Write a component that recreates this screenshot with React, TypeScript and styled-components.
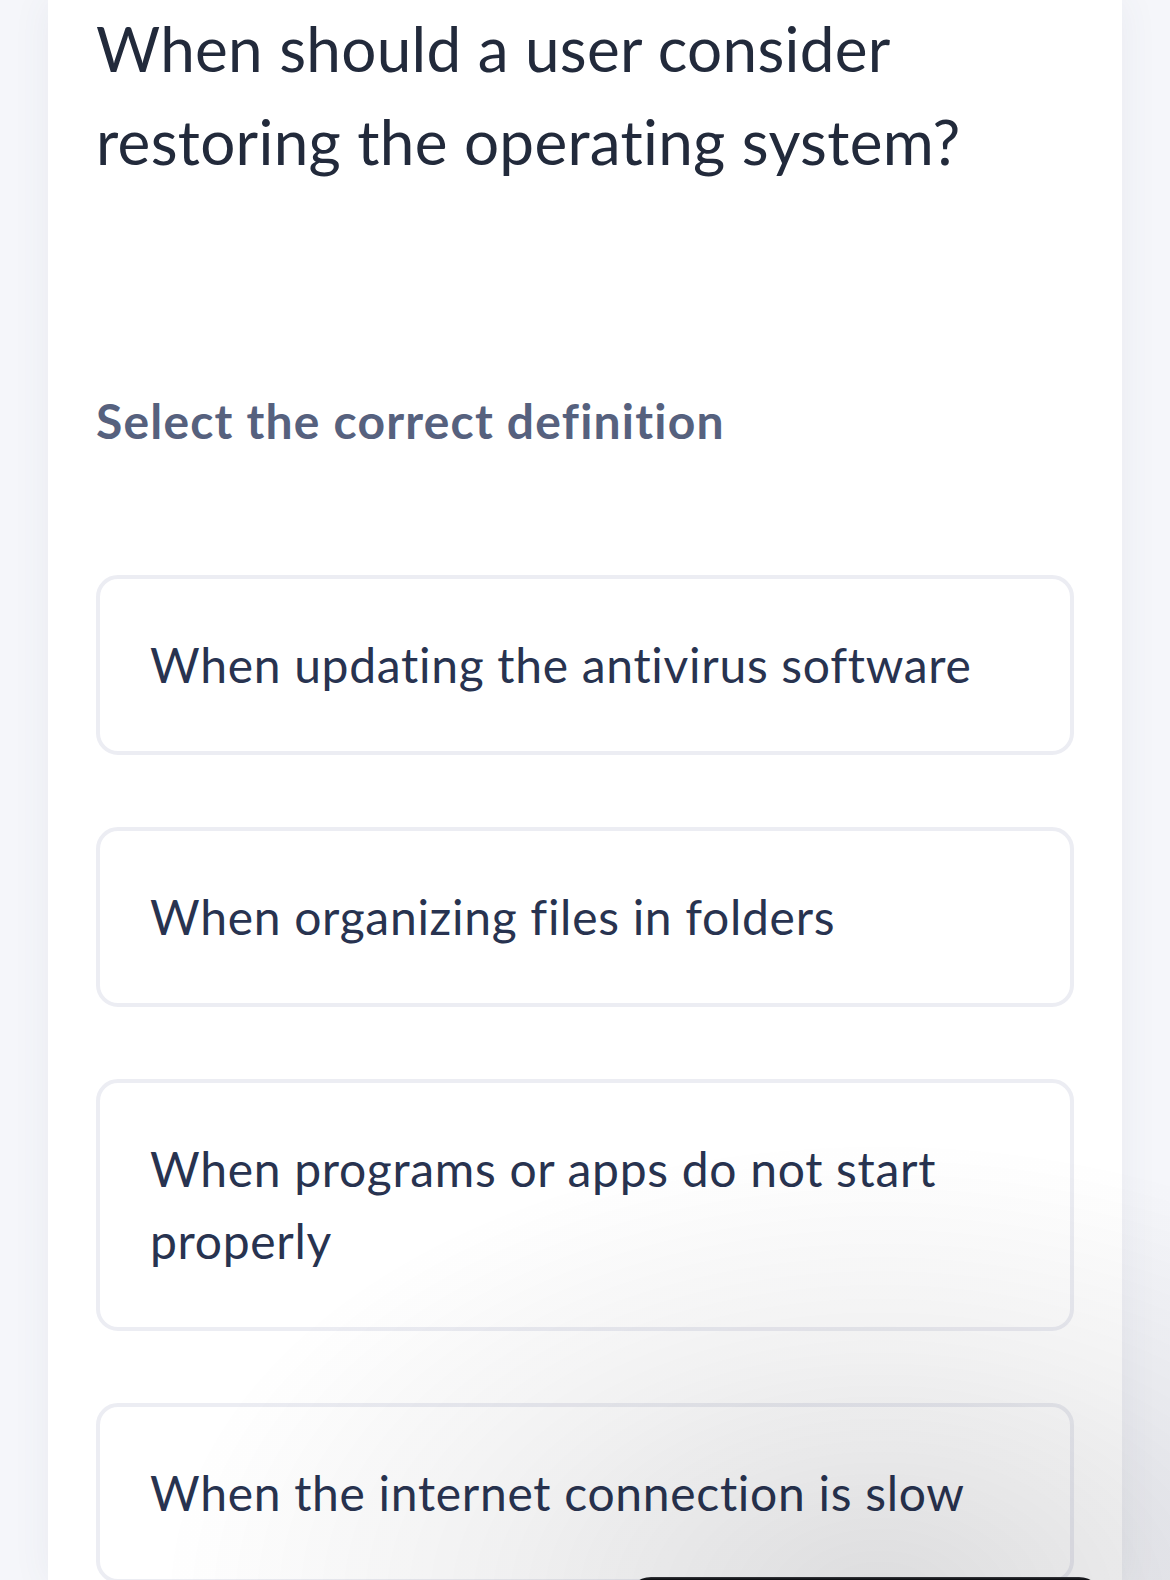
import styled, { createGlobalStyle } from "styled-components";

const GlobalStyle = createGlobalStyle`
  html, body {
    margin: 0;
    padding: 0;
    background: #f5f6fa;
    overflow: hidden;
  }
  body {
    font-family: Lato, "Noto Sans", sans-serif;
  }
`;

const Page = styled.div`
  height: 1580px;
  padding: 0 48px;
  box-sizing: border-box;
  overflow: hidden;
`;

const Card = styled.main`
  background: #ffffff;
  width: 1074px;
  min-height: 1580px;
  padding: 2px 48px 0 48px;
  box-sizing: border-box;
  box-shadow: 0 0 36px rgba(70, 80, 120, 0.07);
`;

const Question = styled.h1`
  margin: 0;
  font-size: 62px;
  font-weight: 400;
  line-height: 93px;
  color: #222a3b;
  letter-spacing: 0.3px;
`;

const Prompt = styled.h2`
  margin: 205px 0 0;
  font-size: 48px;
  font-weight: 700;
  line-height: 56px;
  letter-spacing: 1.2px;
  color: #56617e;
`;

const Options = styled.div`
  display: flex;
  flex-direction: column;
  gap: 72px;
  margin-top: 126px;
`;

const Option = styled.button`
  display: block;
  width: 100%;
  text-align: left;
  background: transparent;
  border: 4px solid #ecedf3;
  border-radius: 22px;
  padding: 50px 50px;
  font-family: inherit;
  font-size: 48px;
  line-height: 72px;
  letter-spacing: 0.7px;
  color: #283350;
  cursor: pointer;
`;

const Shade = styled.div`
  position: fixed;
  left: 0;
  right: 0;
  top: 1100px;
  bottom: 0;
  pointer-events: none;
  background: radial-gradient(
    ellipse 720px 460px at 880px 500px,
    rgba(20, 20, 30, 0.15),
    rgba(20, 20, 30, 0.06) 55%,
    rgba(20, 20, 30, 0) 100%
  );
`;

const ActionBar = styled.div`
  position: fixed;
  left: 627px;
  top: 1577px;
  width: 476px;
  height: 40px;
  background: linear-gradient(180deg, #3a3b40 0, #101115 2px);
  border-radius: 24px 24px 0 0;
`;

const options = [
  "When updating the antivirus software",
  "When organizing files in folders",
  "When programs or apps do not start properly",
  "When the internet connection is slow",
];

export default function App() {
  return (
    <>
      <GlobalStyle />
      <Page>
        <Card>
          <Question>
            When should a user consider
            <br />
            restoring the operating system?
          </Question>
          <Prompt>Select the correct definition</Prompt>
          <Options>
            {options.map((o) => (
              <Option key={o}>{o}</Option>
            ))}
          </Options>
        </Card>
      </Page>
      <Shade />
      <ActionBar />
    </>
  );
}
